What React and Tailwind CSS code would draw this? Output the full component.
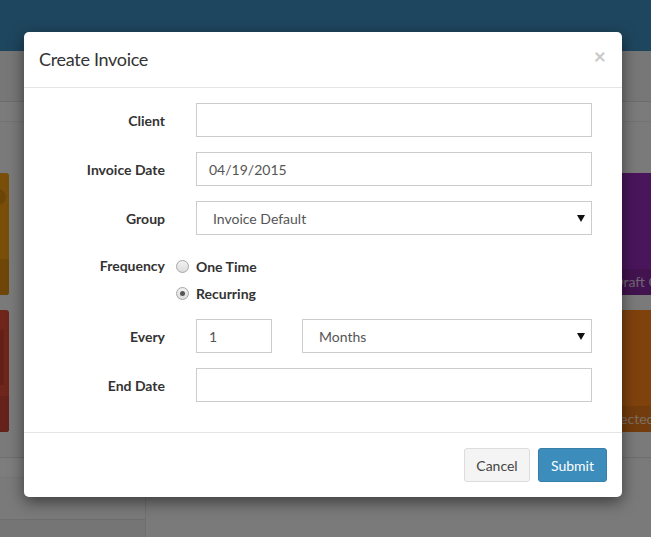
import React from 'react';

function Caret() {
  return (
    <svg width="8" height="7" viewBox="0 0 8 7" className="shrink-0">
      <polygon points="0,0 8,0 4,7" fill="#111" />
    </svg>
  );
}

function Radio({ checked, label }) {
  return (
    <label className="flex h-[20px] items-center">
      <span className="ml-[-20px] mr-[7px] flex h-[13px] w-[13px] items-center justify-center rounded-full border border-[#a6a6a6] bg-gradient-to-b from-[#f2f2f2] to-[#dcdcdc]">
        {checked && <span className="h-[5px] w-[5px] rounded-full bg-[#555]" />}
      </span>
      <span className="text-[14px] font-bold text-[#333]">{label}</span>
    </label>
  );
}

function Row({ label, children }) {
  return (
    <div className="flex items-center">
      <div className="w-[126px] text-right text-[14px] font-bold text-[#333]">{label}</div>
      <div className="ml-[31px] flex w-[396px] items-center">{children}</div>
    </div>
  );
}

const inputCls = 'h-[34px] border border-[#ccc] bg-white px-[12px] text-[14px] text-[#555] flex items-center';

export default function App() {
  return (
    <div className="relative h-[537px] w-[651px] overflow-hidden bg-[#f4f4f4] font-['Lato',sans-serif]">
      {/* page behind the backdrop */}
      <div className="h-[51px] bg-[#3c8dbc]" />
      <div className="h-[51px] border-b border-[#dadada] bg-[#eeeeee]" />
      <div className="h-[20px] border-b border-[#e6e6e6] bg-[#f6f6f6]" />
      <div className="pt-[51px]">
        <div className="flex h-[122px] justify-between">
          <div className="relative w-[9px] overflow-hidden rounded-r-[3px] bg-[#f39c12]">
            <div className="absolute left-[-10px] top-[16px] h-[16px] w-[16px] rounded-full bg-[#d68a10]" />
            <div className="absolute bottom-0 h-[36px] w-full bg-[#db8c10]" />
          </div>
          <div className="flex w-[51px] flex-col justify-end overflow-hidden bg-[#932ab6]">
            <div className="h-[26px] whitespace-nowrap bg-[#84269f] pl-[13px] text-[14px] leading-[26px] text-white/75">Draft Quotes</div>
          </div>
        </div>
        <div className="mt-[15px] flex h-[122px] justify-between">
          <div className="relative w-[9px] overflow-hidden rounded-r-[3px] bg-[#dd4b39]">
            <div className="absolute left-0 top-[20px] h-[55px] w-[4px] bg-[#c4402f]" />
            <div className="absolute bottom-0 h-[36px] w-full bg-[#c84434]" />
          </div>
          <div className="flex w-[62px] flex-col justify-end overflow-hidden bg-[#ff851b]">
            <div className="h-[26px] whitespace-nowrap bg-[#e67818] pl-[12px] text-[14px] leading-[26px] text-white/75">Rejected</div>
          </div>
        </div>
        <div className="mt-[25px] flex border-t border-[#dcdcdc]">
          <div className="w-[146px] border-r border-[#e0e0e0]">
            <div className="h-[20px] border-b border-[#ececec] bg-[#fafafa]" />
            <div className="h-[42px] border-b border-[#dcdcdc]" />
            <div className="h-[20px] bg-[#eaeaea]" />
          </div>
          <div className="flex-1" />
        </div>
      </div>

      {/* backdrop */}
      <div className="absolute inset-0 bg-black/50" />

      {/* modal */}
      <div className="absolute left-[24px] top-[32px] w-[598px] rounded-[5px] bg-white shadow-[0_5px_15px_rgba(0,0,0,0.5)]">
        <div className="flex h-[56px] items-center justify-between border-b border-[#e5e5e5] px-[15px]">
          <h4 className="text-[18px] tracking-[-0.3px] text-[#333]">Create Invoice</h4>
          <span className="mr-[1px] mt-[-8px] text-[21px] font-bold leading-none text-[#c8c8c8]">×</span>
        </div>
        <div className="flex flex-col gap-[15px] px-[15px] pb-[30px] pt-[15px]">
          <Row label="Client">
            <div className={`${inputCls} w-full`} />
          </Row>
          <Row label="Invoice Date">
            <div className={`${inputCls} w-full`}>04/19/2015</div>
          </Row>
          <Row label="Group">
            <div className={`${inputCls} w-full justify-between pl-[16px] pr-[6px]`}>
              <span>Invoice Default</span>
              <Caret />
            </div>
          </Row>
          <div className="flex items-start pb-[1px]">
            <div className="w-[126px] pt-[6px] text-right text-[14px] font-bold leading-[20px] text-[#333]">Frequency</div>
            <div className="ml-[31px] flex flex-col gap-[7px] pt-[6px]">
              <Radio label="One Time" />
              <Radio checked label="Recurring" />
            </div>
          </div>
          <Row label="Every">
            <div className={`${inputCls} w-[76px] shrink-0`}>1</div>
            <div className={`${inputCls} ml-[30px] flex-1 justify-between pl-[16px] pr-[6px]`}>
              <span>Months</span>
              <Caret />
            </div>
          </Row>
          <Row label="End Date">
            <div className={`${inputCls} w-full`} />
          </Row>
        </div>
        <div className="flex justify-end gap-[8px] border-t border-[#e5e5e5] p-[15px]">
          <button className="h-[34px] w-[66px] rounded-[3px] border border-[#ddd] bg-[#f4f4f4] text-[14px] text-[#444]">Cancel</button>
          <button className="h-[34px] w-[69px] rounded-[3px] border border-[#367fa9] bg-[#3c8dbc] text-[14px] text-white">Submit</button>
        </div>
      </div>
    </div>
  );
}
